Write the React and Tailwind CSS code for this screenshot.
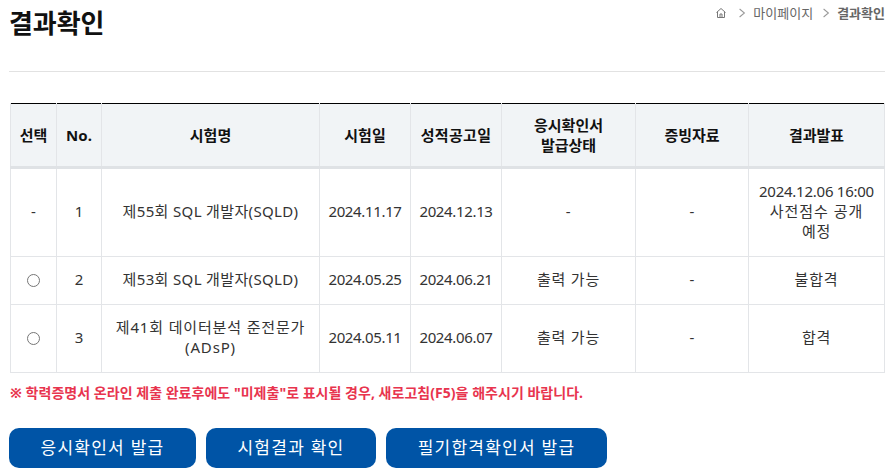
import React from "react";

const rows = [
  { sel: "-", no: "1", name: "제55회 SQL 개발자(SQLD)", nt: "tracking-[0.35px]", date: "2024.11.17", pub: "2024.12.13", st: "-", res: [["2024.12.06 16:00", "tracking-[-0.25px]"], ["사전점수 공개", "tracking-[1px]"], ["예정", "tracking-[0.8px]"]], h: "h-[89px]" },
  { sel: "r", no: "2", name: "제53회 SQL 개발자(SQLD)", nt: "tracking-[0.35px]", date: "2024.05.25", pub: "2024.06.21", st: "출력 가능", res: [["불합격", "tracking-[0.8px]"]], h: "h-[48px]" },
  { sel: "r", no: "3", name: "제41회 데이터분석 준전문가 (ADsP)", nt: "tracking-[0.85px]", date: "2024.05.11", pub: "2024.06.07", st: "출력 가능", res: [["합격", "tracking-[0.8px]"]], h: "h-[68px]" },
];
const th = "border border-[#e3e5e8] border-t-0 border-b-[3px] border-b-[#dfe2e5] bg-[#f1f4f6] font-bold text-[15px] leading-[20px] text-[#111] px-1 text-center align-middle";
const td = "border border-[#e3e5e8] text-[15px] leading-[20px] text-[#333] px-2 pb-[3px] text-center align-middle";
const num = "border border-[#e3e5e8] text-[15px] leading-[20px] text-[#333] px-0 pb-[3px] text-center align-middle tracking-[-0.35px]";
const btn = "h-10 rounded-[10px] bg-[#0054a6] text-white text-[17px] tracking-[1.25px] flex items-center justify-center";

function Chevron() {
  return (
    <svg viewBox="0 0 10 12" width="8" height="10" fill="none" stroke="#999" strokeWidth="1.3">
      <path d="M2 1l6 5-6 5" />
    </svg>
  );
}

export default function App() {
  return (
    <div className="w-[891px] h-[474px] overflow-hidden bg-white font-['Noto_Sans','Noto_Sans_CJK_KR',sans-serif]">
      <div className="ml-[9px] mr-[6px] h-[72px] border-b border-[#e2e2e2] flex justify-between items-start">
        <h1 className="font-bold text-[26px] leading-[36px] pt-[5px] h-[41px] text-[#111] tracking-[-0.1px]">결과확인</h1>
        <nav className="flex items-center text-[13px] leading-[16px] text-[#666] pt-[5px] h-[21px]">
          <svg viewBox="0 0 24 24" width="12" height="12" fill="none" stroke="#777" strokeWidth="2" className="mr-[11px]">
            <path d="M3 11 12 3l9 8" />
            <path d="M5 10v11h14V10" />
            <path d="M10 21v-7h4v7" />
          </svg>
          <Chevron />
          <span className="ml-[7px]">마이페이지</span>
          <span className="ml-[9px] mr-[7px]"><Chevron /></span>
          <span className="font-bold">결과확인</span>
        </nav>
      </div>
      <div className="pl-[10px] pt-[31px]">
        <table className="w-[874px] table-fixed border-collapse">
          <colgroup>
            <col className="w-[46px]" /><col className="w-[45px]" /><col className="w-[218px]" /><col className="w-[91px]" />
            <col className="w-[91px]" /><col className="w-[134px]" /><col className="w-[113px]" /><col className="w-[136px]" />
          </colgroup>
          <thead>
            <tr className="h-[64px] border-t border-t-black">
              <th className={th}>선택</th>
              <th className={th}>No.</th>
              <th className={th}>시험명</th>
              <th className={th}>시험일</th>
              <th className={th + " tracking-[0.3px]"}>성적공고일</th>
              <th className={th}>응시확인서<br />발급상태</th>
              <th className={th}>증빙자료</th>
              <th className={th}>결과발표</th>
            </tr>
          </thead>
          <tbody>
            {rows.map((r) => (
              <tr key={r.no} className={r.h}>
                <td className={td}>
                  {r.sel === "-" ? "-" : (
                    <span className="inline-block align-middle w-[13px] h-[13px] rounded-full border border-[#767676] bg-white" />
                  )}
                </td>
                <td className={td}>{r.no}</td>
                <td className={td + " " + r.nt}>{r.name}</td>
                <td className={num}>{r.date}</td>
                <td className={num}>{r.pub}</td>
                <td className={td + " tracking-[0.8px]"}>{r.st}</td>
                <td className={td}>-</td>
                <td className={td + " !px-0"}>
                  {r.res.map(([l, t]) => (<div key={l} className={t}>{l}</div>))}
                </td>
              </tr>
            ))}
          </tbody>
        </table>
        <p className="mt-[10px] text-[14px] leading-[20px] font-bold text-[#e8344e] tracking-[0.03px]">
          ※ 학력증명서 온라인 제출 완료후에도 "미제출"로 표시될 경우, 새로고침(F5)을 해주시기 바랍니다.
        </p>
        <div className="flex gap-[10px] mt-[25px] -ml-[1px]">
          <button className={btn + " w-[187px]"}>응시확인서 발급</button>
          <button className={btn + " w-[170px]"}>시험결과 확인</button>
          <button className={btn + " w-[221px]"}>필기합격확인서 발급</button>
        </div>
      </div>
    </div>
  );
}
